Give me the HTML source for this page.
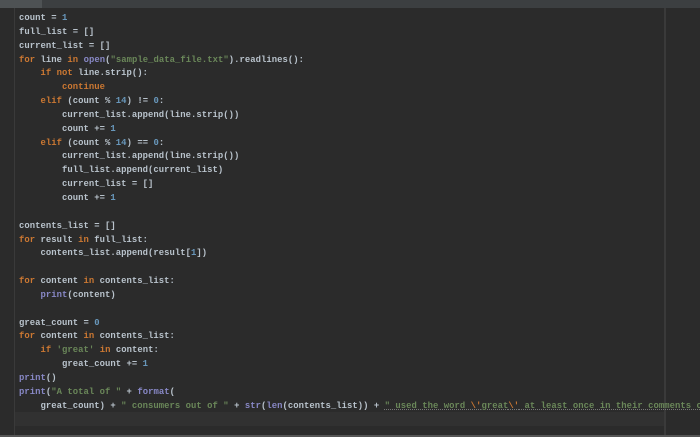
<!DOCTYPE html>
<html><head><style>
html,body{margin:0;padding:0;width:700px;height:437px;overflow:hidden;background:#2b2b2b}
.top{position:absolute;left:0;top:0;width:700px;height:8px;background:#3c3f41}
.tab{position:absolute;left:0;top:0;width:42px;height:8px;background:#4e5254}
.gut{position:absolute;left:14px;top:8px;width:1px;height:429px;background:#3a3a3a}
.margin{position:absolute;left:664px;top:8px;width:2px;height:429px;background:#3a3a3a}
.cur{position:absolute;left:15px;top:412px;width:649px;height:14px;background:#313131}
.bot{position:absolute;left:0;top:435px;width:700px;height:2px;background:#555}
pre{position:absolute;left:19px;top:12px;margin:0;font:bold 8.9px/13.85px "Liberation Mono",monospace;color:#b9c3cc;letter-spacing:0.05px}
.k{color:#cc7832}.n{color:#6897bb}.s{color:#6a8759}.b{color:#8888c6}
.u{text-decoration:underline dotted #777}
</style></head><body>
<div class="top"></div><div class="tab"></div>
<div class="cur"></div>
<div class="gut"></div><div class="margin"></div>
<pre>count = <span class="n">1</span>
full_list = []
current_list = []
<span class="k">for</span> line <span class="k">in</span> <span class="b">open</span>(<span class="s">"sample_data_file.txt"</span>).readlines():
    <span class="k">if not</span> line.strip():
        <span class="k">continue</span>
    <span class="k">elif</span> (count % <span class="n">14</span>) != <span class="n">0</span>:
        current_list.append(line.strip())
        count += <span class="n">1</span>
    <span class="k">elif</span> (count % <span class="n">14</span>) == <span class="n">0</span>:
        current_list.append(line.strip())
        full_list.append(current_list)
        current_list = []
        count += <span class="n">1</span>

contents_list = []
<span class="k">for</span> result <span class="k">in</span> full_list:
    contents_list.append(result[<span class="n">1</span>])

<span class="k">for</span> content <span class="k">in</span> contents_list:
    <span class="b">print</span>(content)

great_count = <span class="n">0</span>
<span class="k">for</span> content <span class="k">in</span> contents_list:
    <span class="k">if</span> <span class="s">'great'</span> <span class="k">in</span> content:
        great_count += <span class="n">1</span>
<span class="b">print</span>()
<span class="b">print</span>(<span class="s">"A total of "</span> + <span class="b">format</span>(
    great_count) + <span class="s">" consumers out of "</span> + <span class="b">str</span>(<span class="b">len</span>(contents_list)) + <span class="s u">" used the word <span class="k">\'</span>great<span class="k">\'</span> at least once in their comments c</span></pre>
<div class="bot"></div>
</body></html>
